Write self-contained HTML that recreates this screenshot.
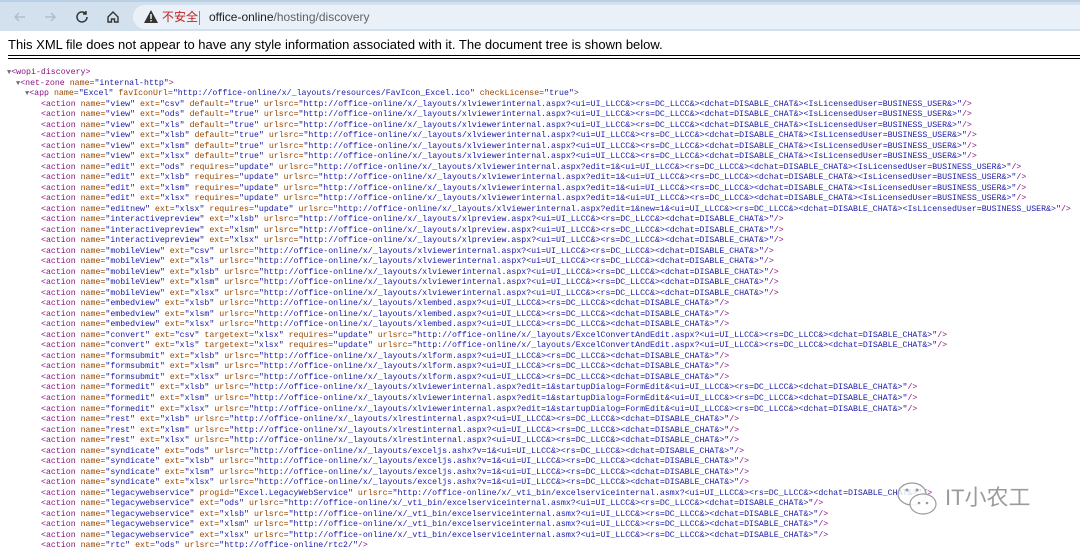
<!DOCTYPE html>
<html><head><meta charset="utf-8">
<style>
*{margin:0;padding:0;box-sizing:border-box}
html,body{width:1080px;height:548px;overflow:hidden}
body{background:#fff;position:relative;font-family:"Liberation Sans",sans-serif}
#bar{position:absolute;left:0;top:0;width:1080px;height:31px;background:#d3e1ee;border-top:2px solid #b9cfe3}
#addr{position:absolute;left:133px;top:3px;width:960px;height:24px;background:#e9f0f7;border-radius:12px}
.ic{position:absolute;top:7px}
#url{position:absolute;left:209px;top:8px;font-size:12px;color:#202124}
#url span{color:#5f6368}
#warn{position:absolute;left:162px;top:8px;font-size:12px;color:#c5221f;font-family:"Liberation Sans","Noto Sans CJK SC",sans-serif;line-height:14px}
#sep{position:absolute;left:199px;top:9px;width:1px;height:14px;background:#888}
#msg{position:absolute;left:8px;top:37px;font-size:13px;color:#000}
#rule{position:absolute;left:8px;top:55px;width:1072px;height:4px;border-top:1px solid #000;border-bottom:1px solid #000}
#xml{position:absolute;left:0;top:68px;width:1080px;font-family:"Liberation Mono",monospace;font-size:8.25px;line-height:10.53px;color:#000}
.l{height:10.53px;overflow:hidden;white-space:pre}
.t{color:#881280}.a{color:#994500}.v{color:#1a1aa6}
.tr{color:#6e6e6e;font-size:7px}
#wm{position:absolute;color:#8a8a8a;font-size:22px;font-family:"Liberation Sans","Noto Sans CJK SC",sans-serif;opacity:.85}
</style></head><body>
<div id="bar">
<svg class="ic" style="left:12px" width="16" height="16" viewBox="0 0 16 16"><path d="M13 8H3M7 4L3 8l4 4" stroke="#b4bcc6" stroke-width="1.5" fill="none"/></svg>
<svg class="ic" style="left:42px" width="16" height="16" viewBox="0 0 16 16"><path d="M3 8h10M9 4l4 4-4 4" stroke="#b4bcc6" stroke-width="1.5" fill="none"/></svg>
<svg class="ic" style="left:74px" width="16" height="16" viewBox="0 0 16 16"><path d="M13 8a5 5 0 1 1-1.5-3.6M12 2v3h-3" stroke="#333" stroke-width="1.5" fill="none"/></svg>
<svg class="ic" style="left:105px" width="16" height="16" viewBox="0 0 16 16"><path d="M3 8l5-5 5 5v5h-3.5v-3h-3v3H3z" stroke="#333" stroke-width="1.4" fill="none"/></svg>
<div id="addr"></div>
<svg class="ic" style="left:144px;top:8px" width="14" height="13" viewBox="0 0 14 13"><path d="M7 0L14 13H0z" fill="#333"/><rect x="6.3" y="4" width="1.4" height="5" fill="#fff"/><rect x="6.3" y="10" width="1.4" height="1.4" fill="#fff"/></svg>
<div id="warn">不安全</div><div id="sep"></div>
<div id="url">office-online<span>/hosting/discovery</span></div>
</div>
<div id="msg">This XML file does not appear to have any style information associated with it. The document tree is shown below.</div>
<div id="rule"></div>
<div id="xml"><div class="l" style="padding-left:7px"><span class="tr">▼</span><span class="t">&lt;wopi-discovery&gt;</span></div><div class="l" style="padding-left:16px"><span class="tr">▼</span><span class="t">&lt;net-zone</span> <span class="a">name=</span><span class="v">"internal-http"</span><span class="t">&gt;</span></div><div class="l" style="padding-left:25px"><span class="tr">▼</span><span class="t">&lt;app</span> <span class="a">name=</span><span class="v">"Excel"</span> <span class="a">favIconUrl=</span><span class="v">"http://office-online/x/_layouts/resources/FavIcon_Excel.ico"</span> <span class="a">checkLicense=</span><span class="v">"true"</span><span class="t">&gt;</span></div><div style="padding-left:41px"><div class="l"><span class="t">&lt;action</span> <span class="a">name=</span><span class="v">"view"</span> <span class="a">ext=</span><span class="v">"csv"</span> <span class="a">default=</span><span class="v">"true"</span> <span class="a">urlsrc=</span><span class="v">"http://office-online/x/_layouts/xlviewerinternal.aspx?&lt;ui=UI_LLCC&amp;&gt;&lt;rs=DC_LLCC&amp;&gt;&lt;dchat=DISABLE_CHAT&amp;&gt;&lt;IsLicensedUser=BUSINESS_USER&amp;&gt;"</span><span class="t">/&gt;</span></div><div class="l"><span class="t">&lt;action</span> <span class="a">name=</span><span class="v">"view"</span> <span class="a">ext=</span><span class="v">"ods"</span> <span class="a">default=</span><span class="v">"true"</span> <span class="a">urlsrc=</span><span class="v">"http://office-online/x/_layouts/xlviewerinternal.aspx?&lt;ui=UI_LLCC&amp;&gt;&lt;rs=DC_LLCC&amp;&gt;&lt;dchat=DISABLE_CHAT&amp;&gt;&lt;IsLicensedUser=BUSINESS_USER&amp;&gt;"</span><span class="t">/&gt;</span></div><div class="l"><span class="t">&lt;action</span> <span class="a">name=</span><span class="v">"view"</span> <span class="a">ext=</span><span class="v">"xls"</span> <span class="a">default=</span><span class="v">"true"</span> <span class="a">urlsrc=</span><span class="v">"http://office-online/x/_layouts/xlviewerinternal.aspx?&lt;ui=UI_LLCC&amp;&gt;&lt;rs=DC_LLCC&amp;&gt;&lt;dchat=DISABLE_CHAT&amp;&gt;&lt;IsLicensedUser=BUSINESS_USER&amp;&gt;"</span><span class="t">/&gt;</span></div><div class="l"><span class="t">&lt;action</span> <span class="a">name=</span><span class="v">"view"</span> <span class="a">ext=</span><span class="v">"xlsb"</span> <span class="a">default=</span><span class="v">"true"</span> <span class="a">urlsrc=</span><span class="v">"http://office-online/x/_layouts/xlviewerinternal.aspx?&lt;ui=UI_LLCC&amp;&gt;&lt;rs=DC_LLCC&amp;&gt;&lt;dchat=DISABLE_CHAT&amp;&gt;&lt;IsLicensedUser=BUSINESS_USER&amp;&gt;"</span><span class="t">/&gt;</span></div><div class="l"><span class="t">&lt;action</span> <span class="a">name=</span><span class="v">"view"</span> <span class="a">ext=</span><span class="v">"xlsm"</span> <span class="a">default=</span><span class="v">"true"</span> <span class="a">urlsrc=</span><span class="v">"http://office-online/x/_layouts/xlviewerinternal.aspx?&lt;ui=UI_LLCC&amp;&gt;&lt;rs=DC_LLCC&amp;&gt;&lt;dchat=DISABLE_CHAT&amp;&gt;&lt;IsLicensedUser=BUSINESS_USER&amp;&gt;"</span><span class="t">/&gt;</span></div><div class="l"><span class="t">&lt;action</span> <span class="a">name=</span><span class="v">"view"</span> <span class="a">ext=</span><span class="v">"xlsx"</span> <span class="a">default=</span><span class="v">"true"</span> <span class="a">urlsrc=</span><span class="v">"http://office-online/x/_layouts/xlviewerinternal.aspx?&lt;ui=UI_LLCC&amp;&gt;&lt;rs=DC_LLCC&amp;&gt;&lt;dchat=DISABLE_CHAT&amp;&gt;&lt;IsLicensedUser=BUSINESS_USER&amp;&gt;"</span><span class="t">/&gt;</span></div><div class="l"><span class="t">&lt;action</span> <span class="a">name=</span><span class="v">"edit"</span> <span class="a">ext=</span><span class="v">"ods"</span> <span class="a">requires=</span><span class="v">"update"</span> <span class="a">urlsrc=</span><span class="v">"http://office-online/x/_layouts/xlviewerinternal.aspx?edit=1&amp;&lt;ui=UI_LLCC&amp;&gt;&lt;rs=DC_LLCC&amp;&gt;&lt;dchat=DISABLE_CHAT&amp;&gt;&lt;IsLicensedUser=BUSINESS_USER&amp;&gt;"</span><span class="t">/&gt;</span></div><div class="l"><span class="t">&lt;action</span> <span class="a">name=</span><span class="v">"edit"</span> <span class="a">ext=</span><span class="v">"xlsb"</span> <span class="a">requires=</span><span class="v">"update"</span> <span class="a">urlsrc=</span><span class="v">"http://office-online/x/_layouts/xlviewerinternal.aspx?edit=1&amp;&lt;ui=UI_LLCC&amp;&gt;&lt;rs=DC_LLCC&amp;&gt;&lt;dchat=DISABLE_CHAT&amp;&gt;&lt;IsLicensedUser=BUSINESS_USER&amp;&gt;"</span><span class="t">/&gt;</span></div><div class="l"><span class="t">&lt;action</span> <span class="a">name=</span><span class="v">"edit"</span> <span class="a">ext=</span><span class="v">"xlsm"</span> <span class="a">requires=</span><span class="v">"update"</span> <span class="a">urlsrc=</span><span class="v">"http://office-online/x/_layouts/xlviewerinternal.aspx?edit=1&amp;&lt;ui=UI_LLCC&amp;&gt;&lt;rs=DC_LLCC&amp;&gt;&lt;dchat=DISABLE_CHAT&amp;&gt;&lt;IsLicensedUser=BUSINESS_USER&amp;&gt;"</span><span class="t">/&gt;</span></div><div class="l"><span class="t">&lt;action</span> <span class="a">name=</span><span class="v">"edit"</span> <span class="a">ext=</span><span class="v">"xlsx"</span> <span class="a">requires=</span><span class="v">"update"</span> <span class="a">urlsrc=</span><span class="v">"http://office-online/x/_layouts/xlviewerinternal.aspx?edit=1&amp;&lt;ui=UI_LLCC&amp;&gt;&lt;rs=DC_LLCC&amp;&gt;&lt;dchat=DISABLE_CHAT&amp;&gt;&lt;IsLicensedUser=BUSINESS_USER&amp;&gt;"</span><span class="t">/&gt;</span></div><div class="l"><span class="t">&lt;action</span> <span class="a">name=</span><span class="v">"editnew"</span> <span class="a">ext=</span><span class="v">"xlsx"</span> <span class="a">requires=</span><span class="v">"update"</span> <span class="a">urlsrc=</span><span class="v">"http://office-online/x/_layouts/xlviewerinternal.aspx?edit=1&amp;new=1&amp;&lt;ui=UI_LLCC&amp;&gt;&lt;rs=DC_LLCC&amp;&gt;&lt;dchat=DISABLE_CHAT&amp;&gt;&lt;IsLicensedUser=BUSINESS_USER&amp;&gt;"</span><span class="t">/&gt;</span></div><div class="l"><span class="t">&lt;action</span> <span class="a">name=</span><span class="v">"interactivepreview"</span> <span class="a">ext=</span><span class="v">"xlsb"</span> <span class="a">urlsrc=</span><span class="v">"http://office-online/x/_layouts/xlpreview.aspx?&lt;ui=UI_LLCC&amp;&gt;&lt;rs=DC_LLCC&amp;&gt;&lt;dchat=DISABLE_CHAT&amp;&gt;"</span><span class="t">/&gt;</span></div><div class="l"><span class="t">&lt;action</span> <span class="a">name=</span><span class="v">"interactivepreview"</span> <span class="a">ext=</span><span class="v">"xlsm"</span> <span class="a">urlsrc=</span><span class="v">"http://office-online/x/_layouts/xlpreview.aspx?&lt;ui=UI_LLCC&amp;&gt;&lt;rs=DC_LLCC&amp;&gt;&lt;dchat=DISABLE_CHAT&amp;&gt;"</span><span class="t">/&gt;</span></div><div class="l"><span class="t">&lt;action</span> <span class="a">name=</span><span class="v">"interactivepreview"</span> <span class="a">ext=</span><span class="v">"xlsx"</span> <span class="a">urlsrc=</span><span class="v">"http://office-online/x/_layouts/xlpreview.aspx?&lt;ui=UI_LLCC&amp;&gt;&lt;rs=DC_LLCC&amp;&gt;&lt;dchat=DISABLE_CHAT&amp;&gt;"</span><span class="t">/&gt;</span></div><div class="l"><span class="t">&lt;action</span> <span class="a">name=</span><span class="v">"mobileView"</span> <span class="a">ext=</span><span class="v">"csv"</span> <span class="a">urlsrc=</span><span class="v">"http://office-online/x/_layouts/xlviewerinternal.aspx?&lt;ui=UI_LLCC&amp;&gt;&lt;rs=DC_LLCC&amp;&gt;&lt;dchat=DISABLE_CHAT&amp;&gt;"</span><span class="t">/&gt;</span></div><div class="l"><span class="t">&lt;action</span> <span class="a">name=</span><span class="v">"mobileView"</span> <span class="a">ext=</span><span class="v">"xls"</span> <span class="a">urlsrc=</span><span class="v">"http://office-online/x/_layouts/xlviewerinternal.aspx?&lt;ui=UI_LLCC&amp;&gt;&lt;rs=DC_LLCC&amp;&gt;&lt;dchat=DISABLE_CHAT&amp;&gt;"</span><span class="t">/&gt;</span></div><div class="l"><span class="t">&lt;action</span> <span class="a">name=</span><span class="v">"mobileView"</span> <span class="a">ext=</span><span class="v">"xlsb"</span> <span class="a">urlsrc=</span><span class="v">"http://office-online/x/_layouts/xlviewerinternal.aspx?&lt;ui=UI_LLCC&amp;&gt;&lt;rs=DC_LLCC&amp;&gt;&lt;dchat=DISABLE_CHAT&amp;&gt;"</span><span class="t">/&gt;</span></div><div class="l"><span class="t">&lt;action</span> <span class="a">name=</span><span class="v">"mobileView"</span> <span class="a">ext=</span><span class="v">"xlsm"</span> <span class="a">urlsrc=</span><span class="v">"http://office-online/x/_layouts/xlviewerinternal.aspx?&lt;ui=UI_LLCC&amp;&gt;&lt;rs=DC_LLCC&amp;&gt;&lt;dchat=DISABLE_CHAT&amp;&gt;"</span><span class="t">/&gt;</span></div><div class="l"><span class="t">&lt;action</span> <span class="a">name=</span><span class="v">"mobileView"</span> <span class="a">ext=</span><span class="v">"xlsx"</span> <span class="a">urlsrc=</span><span class="v">"http://office-online/x/_layouts/xlviewerinternal.aspx?&lt;ui=UI_LLCC&amp;&gt;&lt;rs=DC_LLCC&amp;&gt;&lt;dchat=DISABLE_CHAT&amp;&gt;"</span><span class="t">/&gt;</span></div><div class="l"><span class="t">&lt;action</span> <span class="a">name=</span><span class="v">"embedview"</span> <span class="a">ext=</span><span class="v">"xlsb"</span> <span class="a">urlsrc=</span><span class="v">"http://office-online/x/_layouts/xlembed.aspx?&lt;ui=UI_LLCC&amp;&gt;&lt;rs=DC_LLCC&amp;&gt;&lt;dchat=DISABLE_CHAT&amp;&gt;"</span><span class="t">/&gt;</span></div><div class="l"><span class="t">&lt;action</span> <span class="a">name=</span><span class="v">"embedview"</span> <span class="a">ext=</span><span class="v">"xlsm"</span> <span class="a">urlsrc=</span><span class="v">"http://office-online/x/_layouts/xlembed.aspx?&lt;ui=UI_LLCC&amp;&gt;&lt;rs=DC_LLCC&amp;&gt;&lt;dchat=DISABLE_CHAT&amp;&gt;"</span><span class="t">/&gt;</span></div><div class="l"><span class="t">&lt;action</span> <span class="a">name=</span><span class="v">"embedview"</span> <span class="a">ext=</span><span class="v">"xlsx"</span> <span class="a">urlsrc=</span><span class="v">"http://office-online/x/_layouts/xlembed.aspx?&lt;ui=UI_LLCC&amp;&gt;&lt;rs=DC_LLCC&amp;&gt;&lt;dchat=DISABLE_CHAT&amp;&gt;"</span><span class="t">/&gt;</span></div><div class="l"><span class="t">&lt;action</span> <span class="a">name=</span><span class="v">"convert"</span> <span class="a">ext=</span><span class="v">"csv"</span> <span class="a">targetext=</span><span class="v">"xlsx"</span> <span class="a">requires=</span><span class="v">"update"</span> <span class="a">urlsrc=</span><span class="v">"http://office-online/x/_layouts/ExcelConvertAndEdit.aspx?&lt;ui=UI_LLCC&amp;&gt;&lt;rs=DC_LLCC&amp;&gt;&lt;dchat=DISABLE_CHAT&amp;&gt;"</span><span class="t">/&gt;</span></div><div class="l"><span class="t">&lt;action</span> <span class="a">name=</span><span class="v">"convert"</span> <span class="a">ext=</span><span class="v">"xls"</span> <span class="a">targetext=</span><span class="v">"xlsx"</span> <span class="a">requires=</span><span class="v">"update"</span> <span class="a">urlsrc=</span><span class="v">"http://office-online/x/_layouts/ExcelConvertAndEdit.aspx?&lt;ui=UI_LLCC&amp;&gt;&lt;rs=DC_LLCC&amp;&gt;&lt;dchat=DISABLE_CHAT&amp;&gt;"</span><span class="t">/&gt;</span></div><div class="l"><span class="t">&lt;action</span> <span class="a">name=</span><span class="v">"formsubmit"</span> <span class="a">ext=</span><span class="v">"xlsb"</span> <span class="a">urlsrc=</span><span class="v">"http://office-online/x/_layouts/xlform.aspx?&lt;ui=UI_LLCC&amp;&gt;&lt;rs=DC_LLCC&amp;&gt;&lt;dchat=DISABLE_CHAT&amp;&gt;"</span><span class="t">/&gt;</span></div><div class="l"><span class="t">&lt;action</span> <span class="a">name=</span><span class="v">"formsubmit"</span> <span class="a">ext=</span><span class="v">"xlsm"</span> <span class="a">urlsrc=</span><span class="v">"http://office-online/x/_layouts/xlform.aspx?&lt;ui=UI_LLCC&amp;&gt;&lt;rs=DC_LLCC&amp;&gt;&lt;dchat=DISABLE_CHAT&amp;&gt;"</span><span class="t">/&gt;</span></div><div class="l"><span class="t">&lt;action</span> <span class="a">name=</span><span class="v">"formsubmit"</span> <span class="a">ext=</span><span class="v">"xlsx"</span> <span class="a">urlsrc=</span><span class="v">"http://office-online/x/_layouts/xlform.aspx?&lt;ui=UI_LLCC&amp;&gt;&lt;rs=DC_LLCC&amp;&gt;&lt;dchat=DISABLE_CHAT&amp;&gt;"</span><span class="t">/&gt;</span></div><div class="l"><span class="t">&lt;action</span> <span class="a">name=</span><span class="v">"formedit"</span> <span class="a">ext=</span><span class="v">"xlsb"</span> <span class="a">urlsrc=</span><span class="v">"http://office-online/x/_layouts/xlviewerinternal.aspx?edit=1&amp;startupDialog=FormEdit&amp;&lt;ui=UI_LLCC&amp;&gt;&lt;rs=DC_LLCC&amp;&gt;&lt;dchat=DISABLE_CHAT&amp;&gt;"</span><span class="t">/&gt;</span></div><div class="l"><span class="t">&lt;action</span> <span class="a">name=</span><span class="v">"formedit"</span> <span class="a">ext=</span><span class="v">"xlsm"</span> <span class="a">urlsrc=</span><span class="v">"http://office-online/x/_layouts/xlviewerinternal.aspx?edit=1&amp;startupDialog=FormEdit&amp;&lt;ui=UI_LLCC&amp;&gt;&lt;rs=DC_LLCC&amp;&gt;&lt;dchat=DISABLE_CHAT&amp;&gt;"</span><span class="t">/&gt;</span></div><div class="l"><span class="t">&lt;action</span> <span class="a">name=</span><span class="v">"formedit"</span> <span class="a">ext=</span><span class="v">"xlsx"</span> <span class="a">urlsrc=</span><span class="v">"http://office-online/x/_layouts/xlviewerinternal.aspx?edit=1&amp;startupDialog=FormEdit&amp;&lt;ui=UI_LLCC&amp;&gt;&lt;rs=DC_LLCC&amp;&gt;&lt;dchat=DISABLE_CHAT&amp;&gt;"</span><span class="t">/&gt;</span></div><div class="l"><span class="t">&lt;action</span> <span class="a">name=</span><span class="v">"rest"</span> <span class="a">ext=</span><span class="v">"xlsb"</span> <span class="a">urlsrc=</span><span class="v">"http://office-online/x/_layouts/xlrestinternal.aspx?&lt;ui=UI_LLCC&amp;&gt;&lt;rs=DC_LLCC&amp;&gt;&lt;dchat=DISABLE_CHAT&amp;&gt;"</span><span class="t">/&gt;</span></div><div class="l"><span class="t">&lt;action</span> <span class="a">name=</span><span class="v">"rest"</span> <span class="a">ext=</span><span class="v">"xlsm"</span> <span class="a">urlsrc=</span><span class="v">"http://office-online/x/_layouts/xlrestinternal.aspx?&lt;ui=UI_LLCC&amp;&gt;&lt;rs=DC_LLCC&amp;&gt;&lt;dchat=DISABLE_CHAT&amp;&gt;"</span><span class="t">/&gt;</span></div><div class="l"><span class="t">&lt;action</span> <span class="a">name=</span><span class="v">"rest"</span> <span class="a">ext=</span><span class="v">"xlsx"</span> <span class="a">urlsrc=</span><span class="v">"http://office-online/x/_layouts/xlrestinternal.aspx?&lt;ui=UI_LLCC&amp;&gt;&lt;rs=DC_LLCC&amp;&gt;&lt;dchat=DISABLE_CHAT&amp;&gt;"</span><span class="t">/&gt;</span></div><div class="l"><span class="t">&lt;action</span> <span class="a">name=</span><span class="v">"syndicate"</span> <span class="a">ext=</span><span class="v">"ods"</span> <span class="a">urlsrc=</span><span class="v">"http://office-online/x/_layouts/exceljs.ashx?v=1&amp;&lt;ui=UI_LLCC&amp;&gt;&lt;rs=DC_LLCC&amp;&gt;&lt;dchat=DISABLE_CHAT&amp;&gt;"</span><span class="t">/&gt;</span></div><div class="l"><span class="t">&lt;action</span> <span class="a">name=</span><span class="v">"syndicate"</span> <span class="a">ext=</span><span class="v">"xlsb"</span> <span class="a">urlsrc=</span><span class="v">"http://office-online/x/_layouts/exceljs.ashx?v=1&amp;&lt;ui=UI_LLCC&amp;&gt;&lt;rs=DC_LLCC&amp;&gt;&lt;dchat=DISABLE_CHAT&amp;&gt;"</span><span class="t">/&gt;</span></div><div class="l"><span class="t">&lt;action</span> <span class="a">name=</span><span class="v">"syndicate"</span> <span class="a">ext=</span><span class="v">"xlsm"</span> <span class="a">urlsrc=</span><span class="v">"http://office-online/x/_layouts/exceljs.ashx?v=1&amp;&lt;ui=UI_LLCC&amp;&gt;&lt;rs=DC_LLCC&amp;&gt;&lt;dchat=DISABLE_CHAT&amp;&gt;"</span><span class="t">/&gt;</span></div><div class="l"><span class="t">&lt;action</span> <span class="a">name=</span><span class="v">"syndicate"</span> <span class="a">ext=</span><span class="v">"xlsx"</span> <span class="a">urlsrc=</span><span class="v">"http://office-online/x/_layouts/exceljs.ashx?v=1&amp;&lt;ui=UI_LLCC&amp;&gt;&lt;rs=DC_LLCC&amp;&gt;&lt;dchat=DISABLE_CHAT&amp;&gt;"</span><span class="t">/&gt;</span></div><div class="l"><span class="t">&lt;action</span> <span class="a">name=</span><span class="v">"legacywebservice"</span> <span class="a">progid=</span><span class="v">"Excel.LegacyWebService"</span> <span class="a">urlsrc=</span><span class="v">"http://office-online/x/_vti_bin/excelserviceinternal.asmx?&lt;ui=UI_LLCC&amp;&gt;&lt;rs=DC_LLCC&amp;&gt;&lt;dchat=DISABLE_CHAT&amp;&gt;"</span><span class="t">/&gt;</span></div><div class="l"><span class="t">&lt;action</span> <span class="a">name=</span><span class="v">"legacywebservice"</span> <span class="a">ext=</span><span class="v">"ods"</span> <span class="a">urlsrc=</span><span class="v">"http://office-online/x/_vti_bin/excelserviceinternal.asmx?&lt;ui=UI_LLCC&amp;&gt;&lt;rs=DC_LLCC&amp;&gt;&lt;dchat=DISABLE_CHAT&amp;&gt;"</span><span class="t">/&gt;</span></div><div class="l"><span class="t">&lt;action</span> <span class="a">name=</span><span class="v">"legacywebservice"</span> <span class="a">ext=</span><span class="v">"xlsb"</span> <span class="a">urlsrc=</span><span class="v">"http://office-online/x/_vti_bin/excelserviceinternal.asmx?&lt;ui=UI_LLCC&amp;&gt;&lt;rs=DC_LLCC&amp;&gt;&lt;dchat=DISABLE_CHAT&amp;&gt;"</span><span class="t">/&gt;</span></div><div class="l"><span class="t">&lt;action</span> <span class="a">name=</span><span class="v">"legacywebservice"</span> <span class="a">ext=</span><span class="v">"xlsm"</span> <span class="a">urlsrc=</span><span class="v">"http://office-online/x/_vti_bin/excelserviceinternal.asmx?&lt;ui=UI_LLCC&amp;&gt;&lt;rs=DC_LLCC&amp;&gt;&lt;dchat=DISABLE_CHAT&amp;&gt;"</span><span class="t">/&gt;</span></div><div class="l"><span class="t">&lt;action</span> <span class="a">name=</span><span class="v">"legacywebservice"</span> <span class="a">ext=</span><span class="v">"xlsx"</span> <span class="a">urlsrc=</span><span class="v">"http://office-online/x/_vti_bin/excelserviceinternal.asmx?&lt;ui=UI_LLCC&amp;&gt;&lt;rs=DC_LLCC&amp;&gt;&lt;dchat=DISABLE_CHAT&amp;&gt;"</span><span class="t">/&gt;</span></div><div class="l"><span class="t">&lt;action</span> <span class="a">name=</span><span class="v">"rtc"</span> <span class="a">ext=</span><span class="v">"ods"</span> <span class="a">urlsrc=</span><span class="v">"http://office-online/rtc2/"</span><span class="t">/&gt;</span></div></div></div>
<svg style="position:absolute;left:893px;top:478px" width="50" height="42" viewBox="0 0 50 42"><ellipse cx="19" cy="16" rx="14" ry="11" fill="rgba(255,255,255,.8)" stroke="#999" stroke-width="1.2"/><ellipse cx="30" cy="26" rx="13" ry="10" fill="rgba(255,255,255,.9)" stroke="#999" stroke-width="1.2"/><circle cx="14" cy="12" r="1.5" fill="#999"/><circle cx="24" cy="12" r="1.5" fill="#999"/><circle cx="26" cy="25" r="1.3" fill="#999"/><circle cx="34" cy="25" r="1.3" fill="#999"/></svg>
<div id="wm" style="left:945px;top:480px">IT小农工</div>
</body></html>
